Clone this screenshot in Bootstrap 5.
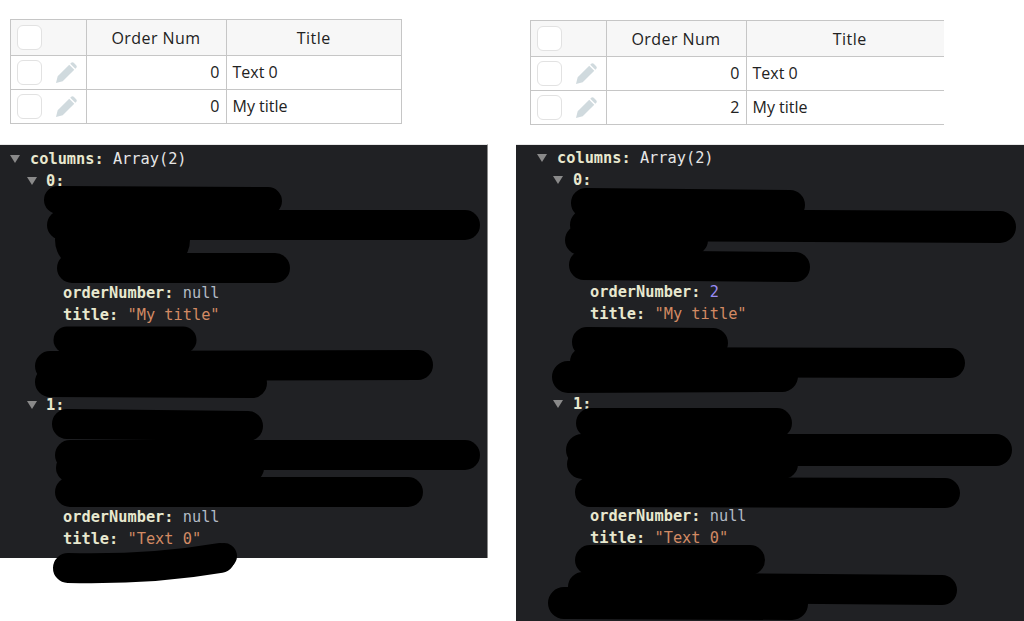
<!DOCTYPE html>
<html lang="en">
<head>
<meta charset="utf-8">
<title>Order columns</title>
<link href="https://cdn.jsdelivr.net/npm/bootstrap@5.3.0/dist/css/bootstrap.min.css" rel="stylesheet">
<style>
html,body{margin:0;background:#fff;overflow:hidden}
.sheet{width:1024px;height:621px;position:relative;overflow:hidden}
.pane-l{width:488px;flex:none}
.pane-r{width:508px;flex:none;margin-left:28px}
.tbl-wrap-l{padding:19px 0 0 10px;height:144px}
.tbl-wrap-r{padding:20px 0 0 14px;height:144px;width:428px;overflow:hidden}
.tbl-wrap-l .data-tbl{width:392px}
.tbl-wrap-r .data-tbl{width:424px}
.data-tbl{table-layout:fixed;border-collapse:collapse;margin:0;font:16px/22px "Open Sans",sans-serif;color:#222;border:1px solid #c6c6c6}
.data-tbl th,.data-tbl td{border:1px solid #c6c6c6;border-width:1.5px;padding:0 6px 2px;font-weight:400;vertical-align:middle;height:34px;box-shadow:none;color:#222}
.data-tbl thead th{height:36px;background:#f7f7f7;text-align:center;letter-spacing:.45px;padding-bottom:0}
.data-tbl .sel{padding:0 0 0 6px;text-align:left}
.col-a{width:75.5px}.col-b{width:140px}
.tick{display:inline-block;width:25px;height:25px;border:1.5px solid #e2e2e2;border-radius:6px;background:#fff;vertical-align:middle}
.pen{width:21px;height:21px;margin-left:14px;vertical-align:middle;fill:#d0dade}
.console{background:#202124;font:15.3px/22.4px "DejaVu Sans Mono",monospace;color:#e8e8cf;border-top:1px solid #e8e8e8}
.pane-l .console{height:414px;border-right:1px solid #8a8a8a;padding-top:2.6px}
.pane-r .console{height:477px;padding-top:1.6px}
.row-line{height:22.4px;position:relative;white-space:nowrap}
.row-key{font-weight:700}
.lv1{padding-left:30px}.lv2{padding-left:46px}.lv3{padding-left:63px}
.pane-r .lv1{padding-left:41px}.pane-r .lv2{padding-left:57px}.pane-r .lv3{padding-left:74px}
.caret-down{display:inline-block;width:0;height:0;border:5.5px solid transparent;border-top:8px solid #8a8a8a;border-bottom:0;position:absolute;top:7px}
.lv1 .caret-down{left:10px}.lv2 .caret-down{left:27px}
.pane-r .lv1 .caret-down{left:21px}.pane-r .lv2 .caret-down{left:37px}
.v-null{color:#b3bbc4}.v-str{color:#d28a63}.v-num{color:#9a8cf5}.v-plain{color:#e6e6e6}
.redact{position:absolute;left:0;top:0;width:1024px;height:621px;pointer-events:none}
.redact path{fill:none;stroke:#000;stroke-linecap:round;stroke-linejoin:round}
</style>
</head>
<body>
<div class="sheet d-flex align-items-start">
  <div class="pane-l">
    <div class="tbl-wrap-l">
      <table class="table data-tbl">
        <colgroup><col class="col-a"><col class="col-b"><col></colgroup>
        <thead><tr><th class="sel"><span class="tick"></span></th><th>Order Num</th><th>Title</th></tr></thead>
        <tbody>
          <tr><td class="sel"><span class="tick"></span><svg class="pen" viewBox="0 0 20 20"><path d="M0 20l1.6-6.4L12.6 2.6l4.8 4.8L6.4 18.4zM13.6 1.6l.8-.8a1.8 1.8 0 0 1 2.5 0l2.3 2.3a1.8 1.8 0 0 1 0 2.5l-.8.8z"/></svg></td><td class="text-end">0</td><td>Text 0</td></tr>
          <tr><td class="sel"><span class="tick"></span><svg class="pen" viewBox="0 0 20 20"><path d="M0 20l1.6-6.4L12.6 2.6l4.8 4.8L6.4 18.4zM13.6 1.6l.8-.8a1.8 1.8 0 0 1 2.5 0l2.3 2.3a1.8 1.8 0 0 1 0 2.5l-.8.8z"/></svg></td><td class="text-end">0</td><td>My title</td></tr>
        </tbody>
      </table>
    </div>
    <div class="console">
      <div class="row-line lv1"><span class="caret-down"></span><span class="row-key">columns:</span> <span class="v-plain">Array(2)</span></div>
      <div class="row-line lv2"><span class="caret-down"></span><span class="row-key">0:</span></div>
      <div class="row-line"></div><div class="row-line"></div><div class="row-line"></div><div class="row-line"></div>
      <div class="row-line lv3"><span class="row-key">orderNumber:</span> <span class="v-null">null</span></div>
      <div class="row-line lv3"><span class="row-key">title:</span> <span class="v-str">"My title"</span></div>
      <div class="row-line"></div><div class="row-line"></div><div class="row-line"></div>
      <div class="row-line lv2"><span class="caret-down"></span><span class="row-key">1:</span></div>
      <div class="row-line"></div><div class="row-line"></div><div class="row-line"></div><div class="row-line"></div>
      <div class="row-line lv3"><span class="row-key">orderNumber:</span> <span class="v-null">null</span></div>
      <div class="row-line lv3"><span class="row-key">title:</span> <span class="v-str">"Text 0"</span></div>
    </div>
  </div>
  <div class="pane-r">
    <div class="tbl-wrap-r">
      <table class="table data-tbl">
        <colgroup><col class="col-a"><col class="col-b"><col></colgroup>
        <thead><tr><th class="sel"><span class="tick"></span></th><th>Order Num</th><th>Title</th></tr></thead>
        <tbody>
          <tr><td class="sel"><span class="tick"></span><svg class="pen" viewBox="0 0 20 20"><path d="M0 20l1.6-6.4L12.6 2.6l4.8 4.8L6.4 18.4zM13.6 1.6l.8-.8a1.8 1.8 0 0 1 2.5 0l2.3 2.3a1.8 1.8 0 0 1 0 2.5l-.8.8z"/></svg></td><td class="text-end">0</td><td>Text 0</td></tr>
          <tr><td class="sel"><span class="tick"></span><svg class="pen" viewBox="0 0 20 20"><path d="M0 20l1.6-6.4L12.6 2.6l4.8 4.8L6.4 18.4zM13.6 1.6l.8-.8a1.8 1.8 0 0 1 2.5 0l2.3 2.3a1.8 1.8 0 0 1 0 2.5l-.8.8z"/></svg></td><td class="text-end">2</td><td>My title</td></tr>
        </tbody>
      </table>
    </div>
    <div class="console">
      <div class="row-line lv1"><span class="caret-down"></span><span class="row-key">columns:</span> <span class="v-plain">Array(2)</span></div>
      <div class="row-line lv2"><span class="caret-down"></span><span class="row-key">0:</span></div>
      <div class="row-line"></div><div class="row-line"></div><div class="row-line"></div><div class="row-line"></div>
      <div class="row-line lv3"><span class="row-key">orderNumber:</span> <span class="v-num">2</span></div>
      <div class="row-line lv3"><span class="row-key">title:</span> <span class="v-str">"My title"</span></div>
      <div class="row-line"></div><div class="row-line"></div><div class="row-line"></div>
      <div class="row-line lv2"><span class="caret-down"></span><span class="row-key">1:</span></div>
      <div class="row-line"></div><div class="row-line"></div><div class="row-line"></div><div class="row-line"></div>
      <div class="row-line lv3"><span class="row-key">orderNumber:</span> <span class="v-null">null</span></div>
      <div class="row-line lv3"><span class="row-key">title:</span> <span class="v-str">"Text 0"</span></div>
    </div>
  </div>
  <svg class="redact" viewBox="0 0 1024 621" aria-hidden="true">
    <g stroke-width="30">
      <path stroke-width="28" d="M58 200L268 201"/>
      <path d="M62 225L465 225"/>
      <path stroke-width="60" d="M85 240L160 240"/>
      <path d="M72 268L275 268"/>
      <path stroke-width="27" d="M67 340L183 340"/>
      <path d="M50 366L418 365"/>
      <path d="M50 382L252 383"/>
      <path d="M67 424L248 426"/>
      <path d="M70 455L465 455"/>
      <path stroke-width="28" d="M70 468L250 468"/>
      <path d="M70 492L408 492"/>
      <path d="M68 568Q150 570 220 558"/>
      <path stroke-width="26" d="M170 565L224 556"/>

      <path d="M586 203L790 205"/>
      <path stroke-width="32" d="M586 225L1000 227"/>
      <path d="M580 240L693 240"/>
      <path d="M584 265L795 267"/>
      <path d="M587 342L713 343"/>
      <path d="M585 362L950 363"/>
      <path stroke-width="32" d="M568 377L782 376"/>
      <path d="M591 423L777 423"/>
      <path stroke-width="32" d="M582 450L996 450"/>
      <path d="M582 464L783 464"/>
      <path d="M590 492L945 493"/>
      <path d="M590 560L750 560"/>
      <path d="M583 587L942 590"/>
      <path stroke-width="32" d="M564 603L792 604"/>
    </g>
  </svg>
</div>
<script src="https://cdn.jsdelivr.net/npm/bootstrap@5.3.0/dist/js/bootstrap.bundle.min.js"></script>
</body>
</html>
